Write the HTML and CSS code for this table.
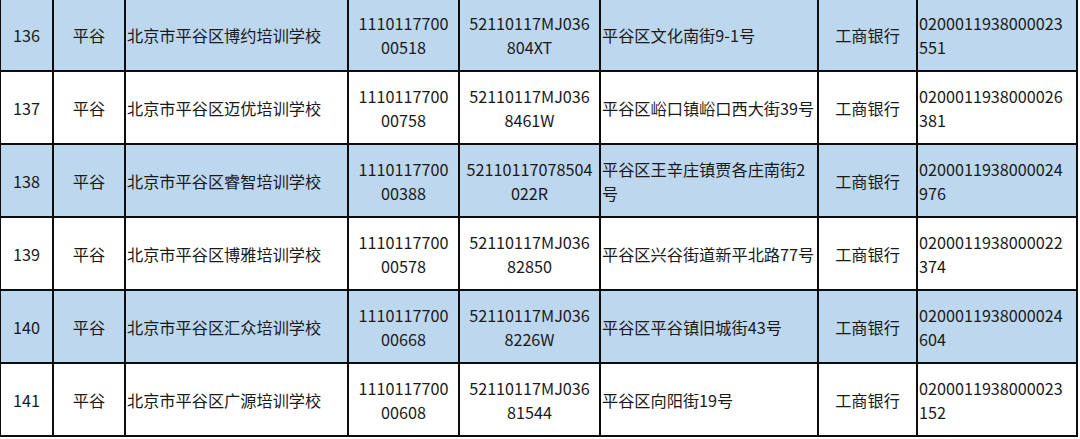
FILE: index.html
```html
<!DOCTYPE html>
<html lang="zh-CN">
<head>
<meta charset="utf-8">
<title>平谷区培训学校</title>
<link rel="stylesheet" href="styles.css">
</head>
<body>
<table class="grid">
  <colgroup>
    <col class="c-no"><col class="c-area"><col class="c-name"><col class="c-code"><col class="c-credit"><col class="c-addr"><col class="c-bank"><col class="c-acct">
  </colgroup>
  <tbody>
    <tr class="shade">
      <td class="mid">136</td><td class="mid">平谷</td><td class="left">北京市平谷区博约培训学校</td>
      <td class="mid">1110117700<br>00518</td><td class="mid">52110117MJ036<br>804XT</td>
      <td class="left">平谷区文化南街9-1号</td><td class="mid">工商银行</td><td class="left">0200011938000023<br>551</td>
    </tr>
    <tr>
      <td class="mid">137</td><td class="mid">平谷</td><td class="left">北京市平谷区迈优培训学校</td>
      <td class="mid">1110117700<br>00758</td><td class="mid">52110117MJ036<br>8461W</td>
      <td class="left">平谷区峪口镇峪口西大街39号</td><td class="mid">工商银行</td><td class="left">0200011938000026<br>381</td>
    </tr>
    <tr class="shade">
      <td class="mid">138</td><td class="mid">平谷</td><td class="left">北京市平谷区睿智培训学校</td>
      <td class="mid">1110117700<br>00388</td><td class="mid">52110117078504<br>022R</td>
      <td class="left">平谷区王辛庄镇贾各庄南街2<br>号</td><td class="mid">工商银行</td><td class="left">0200011938000024<br>976</td>
    </tr>
    <tr>
      <td class="mid">139</td><td class="mid">平谷</td><td class="left">北京市平谷区博雅培训学校</td>
      <td class="mid">1110117700<br>00578</td><td class="mid">52110117MJ036<br>82850</td>
      <td class="left">平谷区兴谷街道新平北路77号</td><td class="mid">工商银行</td><td class="left">0200011938000022<br>374</td>
    </tr>
    <tr class="shade">
      <td class="mid">140</td><td class="mid">平谷</td><td class="left">北京市平谷区汇众培训学校</td>
      <td class="mid">1110117700<br>00668</td><td class="mid">52110117MJ036<br>8226W</td>
      <td class="left">平谷区平谷镇旧城街43号</td><td class="mid">工商银行</td><td class="left">0200011938000024<br>604</td>
    </tr>
    <tr>
      <td class="mid">141</td><td class="mid">平谷</td><td class="left">北京市平谷区广源培训学校</td>
      <td class="mid">1110117700<br>00608</td><td class="mid">52110117MJ036<br>81544</td>
      <td class="left">平谷区向阳街19号</td><td class="mid">工商银行</td><td class="left">0200011938000023<br>152</td>
    </tr>
  </tbody>
</table>
</body>
</html>
```

FILE: styles.css
```css
html, body {
  margin: 0;
  padding: 0;
  background: #ffffff;
}

body {
  overflow: hidden;
  font-family: "Noto Sans CJK SC", "Noto Sans", sans-serif;
  font-size: 16.2px;
  color: #1a1a1a;
}

.grid {
  border-collapse: collapse;
  table-layout: fixed;
  width: 1079px;
  margin: -3px 0 0 -1px;
}

.c-no { width: 53px; }
.c-area { width: 72px; }
.c-name { width: 223px; }
.c-code { width: 111px; }
.c-credit { width: 141px; }
.c-addr { width: 218px; }
.c-bank { width: 99px; }
.c-acct { width: 160px; }

.grid tr {
  height: 73px;
}

.grid td {
  border: 2px solid #0d0d0d;
  padding: 0 1px;
  line-height: 24px;
  vertical-align: middle;
  white-space: nowrap;
  overflow: hidden;
}

.grid tr.shade td {
  background: #bdd7ee;
}

.mid {
  text-align: center;
}

.left {
  text-align: left;
}
```
